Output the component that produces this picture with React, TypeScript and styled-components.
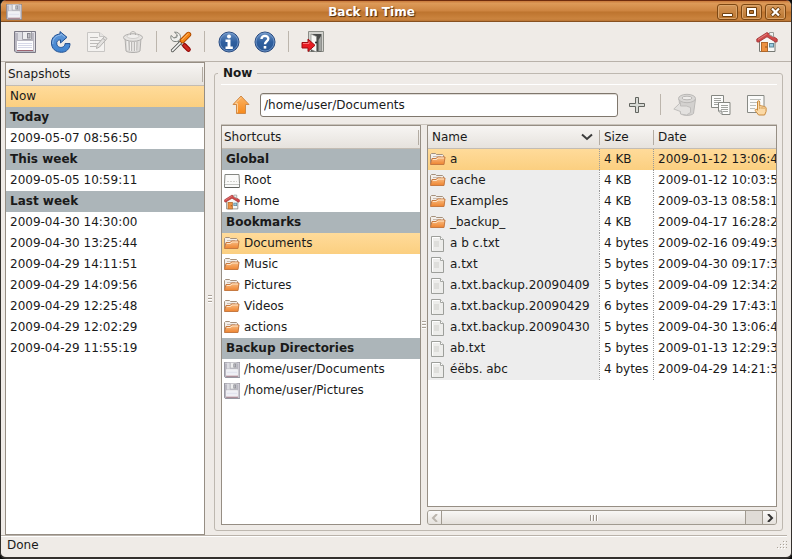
import React, { useState } from "react";
import styled, { createGlobalStyle } from "styled-components";

const GlobalStyle = createGlobalStyle`
  * { box-sizing: border-box; }
  html, body, #root { height: 100%; }
  body { margin: 0; background: #0b0b0b; }
  body, button, input, table { font-family: "DejaVu Sans", Verdana, sans-serif; font-size: 12px; color: #1a1a1a; }
  button { margin: 0; padding: 0; border: 0; background: none; }
`;

/* ---------- window frame ---------- */

const Window = styled.div`
  display: flex;
  flex-direction: column;
  height: 100%;
  border: 1px solid #33302d;
  border-top: 0;
  border-bottom-width: 2px;
  border-radius: 6px;
  background: #efebe7;
  overflow: hidden;
`;

const TitleBar = styled.header`
  display: flex;
  align-items: center;
  height: 22px;
  flex: none;
  padding: 1px 5px 0;
  border-top: 1px solid #6f2c0d;
  border-bottom: 1px solid #87501f;
  background: linear-gradient(#c97a3c, #dd9a58 12%, #cd8440 50%, #bd742e 55%, #cb843f 90%, #b87434);
`;

const Title = styled.h1`
  flex: 1;
  margin: 0;
  padding-left: 4px;
  text-align: center;
  font-size: 12px;
  line-height: 18px;
  color: #fff;
  text-shadow: 1px 1px 1px #4a2a0c;
`;

const WindowButtons = styled.div`
  display: flex;
  gap: 3px;
`;

const WindowButton = styled.button`
  display: flex;
  align-items: center;
  justify-content: center;
  width: 21px;
  height: 16px;
  border: 1px solid #7c4713;
  border-radius: 3px;
  background: linear-gradient(#d6985a, #b9742e);
  box-shadow: inset 0 0 0 1px #dba56c;
`;

const Toolbar = styled.div`
  display: flex;
  align-items: center;
  flex: none;
  height: 40px;
  padding: 0 6px;
  border-bottom: 1px solid #b9b2aa;
`;

const ToolButton = styled.button`
  display: flex;
  align-items: center;
  justify-content: center;
  flex: none;
  width: 36px;
  height: 36px;
  svg { display: block; }
  &:disabled { opacity: 0.5; filter: grayscale(1); }
`;

const ToolSeparator = styled.span`
  flex: none;
  width: 12px;
  height: 21px;
  background: linear-gradient(#bcb5ac, #bcb5ac) 5px 0 / 1px 100% no-repeat;
`;

const Spacer = styled.span`
  flex: 1;
`;

const Main = styled.main`
  display: flex;
  flex: 1;
  min-height: 0;
  padding: 0 8px 0 4px;
`;

const StatusBar = styled.footer`
  display: flex;
  align-items: center;
  justify-content: space-between;
  flex: none;
  height: 22px;
  margin-right: 4px;
  padding-left: 6px;
  padding-bottom: 3px;
  border-top: 1px solid #b9b2aa;
  box-shadow: inset 0 1px #fff;
`;

/* ---------- panes ---------- */

const Pane = styled.section`
  display: flex;
  flex-direction: column;
  flex: none;
  width: 200px;
  min-height: 0;
  border: 1px solid #968e84;
  background: #fff;
  overflow: hidden;
`;

const PaneHeader = styled.div`
  flex: none;
  height: 23px;
  padding: 0 2px;
  line-height: 23px;
  border-bottom: 1px solid #c3bcb3;
  background:
    linear-gradient(#b3aca3, #b3aca3) right 1px center / 1px 15px no-repeat,
    linear-gradient(#f7f5f3, #e6e2dd);
`;

const PlainList = styled.ul`
  margin: 0;
  padding: 0;
  list-style: none;
`;

const GroupRow = styled.li`
  height: 21px;
  padding-left: 4px;
  line-height: 21px;
  font-weight: bold;
  background: #acb5b9;
`;

const ItemButton = styled.button<{ $active: boolean; $indent: number }>`
  display: flex;
  align-items: center;
  gap: 4px;
  width: 100%;
  height: 21px;
  padding-left: ${(p) => p.$indent}px;
  line-height: 21px;
  white-space: nowrap;
  text-align: left;
  background: ${(p) => (p.$active ? "linear-gradient(#ffdb9a, #fbcf80)" : "none")};
  svg { flex: none; }
`;

const Splitter = styled.div<{ $width: number }>`
  display: flex;
  align-items: center;
  justify-content: center;
  flex: none;
  width: ${(p) => p.$width}px;
  &::after {
    content: "";
    width: 4px;
    height: 8px;
    background: repeating-linear-gradient(#aaa298 0 1px, #fff 1px 2px, transparent 2px 3px);
  }
`;

const Group = styled.fieldset`
  display: flex;
  flex-direction: column;
  flex: 1;
  min-width: 0;
  margin: 0 0 4px;
  padding: 0 5px 5px 6px;
  border: 1px solid #beb8b0;
  border-radius: 3px;
`;

const Legend = styled.legend`
  margin-left: -3px;
  padding: 0 5px;
  line-height: 22px;
  font-weight: bold;
`;

const PathBar = styled.div`
  display: flex;
  align-items: center;
  flex: none;
  height: 41px;
  padding: 0 2px;
  border-top: 1px solid #fff;
  border-bottom: 1px solid #c9c3bb;
`;

const PathInput = styled.input`
  flex: 1;
  min-width: 0;
  height: 24px;
  margin: 0 1px;
  padding: 0 3px;
  border: 1px solid #7f776d;
  border-radius: 3px;
  background: #fff;
  box-shadow: inset 0 1px #e0dcd7;
  outline: none;
`;

const Browser = styled.div`
  display: flex;
  flex: 1;
  min-height: 0;
`;

const FileArea = styled.div`
  display: flex;
  flex-direction: column;
  gap: 3px;
  flex: 1;
  min-width: 0;
`;

const FilePane = styled(Pane)`
  flex: 1;
  width: auto;
`;

const FileTable = styled.table`
  width: 100%;
  table-layout: fixed;
  border-collapse: separate;
  border-spacing: 0;
  th, td { padding: 0; overflow: hidden; white-space: nowrap; text-align: left; font-weight: normal; }
`;

const HeadCell = styled.th<{ $width?: number; $first?: boolean }>`
  width: ${(p) => (p.$width ? `${p.$width}px` : "auto")};
  height: 23px;
  border-bottom: 1px solid #c3bcb3;
  background:
    linear-gradient(#b3aca3, #b3aca3) ${(p) => (p.$first ? "-9px" : "0")} center / 1px 15px no-repeat,
    linear-gradient(#f7f5f3, #e6e2dd);
`;

const SortButton = styled.button<{ $pad?: number }>`
  display: flex;
  align-items: center;
  justify-content: space-between;
  width: 100%;
  padding: 0 6px 0 ${(p) => p.$pad ?? 5}px;
  line-height: 22px;
`;

const FileRow = styled.tr<{ $active: boolean }>`
  td {
    height: 21px;
    line-height: 21px;
    background-color: ${(p) => (p.$active ? "#fdd38a" : "#fff")};
    background-image: ${(p) => (p.$active ? "linear-gradient(#ffdb9a, #fbcf80)" : "none")};
  }
  td:first-child { background-color: ${(p) => (p.$active ? "#fdd38a" : "#ededed")}; }
  td + td { padding-left: 4px; border-left: 1px dotted #999; }
`;

const NameCell = styled.div`
  display: flex;
  align-items: center;
  gap: 4px;
  height: 21px;
  padding-left: 2px;
  svg { flex: none; }
`;

const ScrollBar = styled.div`
  display: flex;
  flex: none;
  height: 15px;
  border: 1px solid #a09a90;
  border-radius: 3px;
  background: #dfdbd6;
  overflow: hidden;
`;

const ScrollButton = styled.button<{ $side: "left" | "right" }>`
  display: flex;
  align-items: center;
  justify-content: center;
  width: 14px;
  flex: none;
  border-${(p) => (p.$side === "left" ? "right" : "left")}: 1px solid #a09a90;
  background: linear-gradient(#fbfaf9, #e5e1dc);
`;

const ScrollTrack = styled.div`
  display: flex;
  flex: 1;
`;

const ScrollThumb = styled.div`
  display: flex;
  align-items: center;
  justify-content: center;
  width: 95%;
  border-right: 1px solid #a09a90;
  background: linear-gradient(#f8f7f5, #e4e0db);
`;

/* ---------- icons ---------- */

const FloppyIcon = ({ size = 22 }: { size?: number }) => (
  <svg width={size} height={size} viewBox="0 0 22 22">
    <path d="M.5.5h21v21H2L.5 20z" fill="#b9b7c1" stroke="#7b7984" />
    <path d="M1.5 1.5h19v19" fill="none" stroke="#e2e1e7" />
    <path d="M4 1h14v8H4z" fill="#dcdce1" />
    <path d="M8.5 1v7.500h9V1" fill="#eeeeef" stroke="#a0a0a8" />
    <rect x="13.500" y="2.500" width="2.500" height="4.500" fill="#c4c4ca" stroke="#85858d" />
    <rect x="3" y="10" width="16" height="9" fill="#fdfdfe" />
    <path d="M4 12.500h14M4 14.500h14M4 16.500h14" stroke="#d6d8e8" />
    <path d="M3 19.500h16" stroke="#9d6471" strokeWidth="1" />
  </svg>
);

const RefreshIcon = () => (
  <svg width="22" height="22" viewBox="0 0 22 22">
    <defs>
      <linearGradient id="refreshBlue" x1="0" y1="0" x2="0" y2="1">
        <stop offset="0" stopColor="#5f97d8" />
        <stop offset="1" stopColor="#3f83d0" />
      </linearGradient>
    </defs>
    <path
      d="M10 3V.600L17 6.300 10.500 12V8.800C7.500 8.800 6.300 11 6.800 13.200c.700 3 4.200 4.200 6.700 2.400 1.200-.900 1.500-1.800 1.500-3h5c0 5-3.500 8.700-8.500 8.700C5.500 21.300 1.500 17.500 1.500 12S5 3.500 10 3z"
      fill="url(#refreshBlue)" stroke="#204f91" strokeLinejoin="round"
    />
    <path d="M2.800 13C2.500 8 5.500 4.500 11 4V2.800l4 3.400" fill="none" stroke="#9dc3ee" strokeWidth=".8" />
  </svg>
);

const EditIcon = () => (
  <svg width="22" height="22" viewBox="0 0 22 22">
    <path d="M1.500 1.500h12l5 4v15h-17z" fill="#fafafa" stroke="#a2a2a2" />
    <path d="M13.500 1.500v4h5" fill="#ddd" stroke="#a2a2a2" />
    <path d="M4 6.500h8M4 9.500h11M4 12.500h8M4 15.500h6" stroke="#8c8c8c" />
    <path d="M18.500 5.500l2.500 2-7.500 8.500-3 1.500.5-3.500z" fill="#d8d8d8" stroke="#777" />
    <path d="M17 7.500l2.500 2" stroke="#777" />
  </svg>
);

const TrashIcon = () => (
  <svg width="22" height="22" viewBox="0 0 22 22">
    <path d="M3 7l1 13c2 2 12 2 14 0l1-13z" fill="#cfcfcb" stroke="#73736f" />
    <path d="M7 10.500l.3 9M9.700 11v9M12.300 11v9M15 10.500l-.3 9" stroke="#777" />
    <path d="M5.500 10l.4 9M8.500 11v9M11 11v9M13.700 11v9" stroke="#f5f5f5" />
    <ellipse cx="11" cy="6.500" rx="9.500" ry="3.800" fill="#dededb" stroke="#73736f" />
    <ellipse cx="11" cy="5.300" rx="6" ry="2.200" fill="#f4f4f2" stroke="#999" strokeWidth=".7" />
    <path d="M8.500 4V2.500c0-2.500 5-2.500 5 0V4" fill="none" stroke="#73736f" />
  </svg>
);

const ToolsIcon = () => (
  <svg width="22" height="22" viewBox="0 0 22 22">
    <path d="M5.500 5.500l10 10" stroke="#6d706c" strokeWidth="4.200" />
    <path d="M5.500 5.500l10 10" stroke="#e4e4e1" strokeWidth="2.400" />
    <path d="M14.500 14.500l4 4" stroke="#8f0000" strokeWidth="4.600" strokeLinecap="round" />
    <path d="M14.500 14.500l4 4" stroke="#cc2a20" strokeWidth="2.800" strokeLinecap="round" />
    <path d="M4.500 1.200l2.800 2.600-.600 2.500-2.800.700L1 4.500c-.800 3 .800 6 4 6 3.500.500 6-2 5.500-5C10 2.500 7.500.800 4.500 1.200z" fill="#eeeeec" stroke="#7d807c" />
    <path d="M2.500 19.500L12 10" stroke="#555753" strokeWidth="3.200" strokeLinecap="round" />
    <path d="M2.500 19.500L12 10" stroke="#f6f6f5" strokeWidth="1.700" strokeLinecap="round" />
    <path d="M12.500 9.500L18.500 3.500" stroke="#b04c00" strokeWidth="5.400" strokeLinecap="round" />
    <path d="M12.500 9.500L18.500 3.500" stroke="#f58415" strokeWidth="3.700" strokeLinecap="round" />
    <path d="M12 8.700L18 2.700" stroke="#fdc276" strokeLinecap="round" />
  </svg>
);

const BadgeIcon = ({ glyph }: { glyph: "info" | "help" }) => (
  <svg width="22" height="22" viewBox="0 0 22 22">
    <defs>
      <linearGradient id={`badge-${glyph}`} x1="0" y1="0" x2="0" y2="1">
        <stop offset="0" stopColor="#6d93c4" />
        <stop offset=".5" stopColor="#2f5f9f" />
        <stop offset="1" stopColor="#2a5692" />
      </linearGradient>
    </defs>
    <circle cx="11" cy="11" r="10" fill={`url(#badge-${glyph})`} stroke="#2b4c80" />
    <circle cx="11" cy="11" r="9" fill="none" stroke="#7fa3d2" strokeWidth=".7" />
    {glyph === "info" ? (
      <g fill="#fff">
        <circle cx="11" cy="5.500" r="2" />
        <path d="M7.500 8.500h5v7h2.300V18H7.500v-2.500h2V11h-2z" />
      </g>
    ) : (
      <g>
        <path d="M7.500 8C7.500 3.800 14.500 4 14.300 7.800 14.200 10.300 11 10.200 11 13.300" fill="none" stroke="#fff" strokeWidth="2.400" />
        <rect x="9.700" y="15" width="2.600" height="2.600" fill="#fff" />
      </g>
    )}
  </svg>
);

const ExitIcon = () => (
  <svg width="24" height="22" viewBox="0 0 24 22">
    <path d="M7.500.500h15v20h-15z" fill="#d3d3cf" stroke="#8b8d87" />
    <path d="M10 3h10.500v17.500H10z" fill="#4a4c4b" />
    <path d="M10 3l5.500 2.500V21L10 18.500z" fill="#f7f7f5" stroke="#8b8d88" strokeWidth=".7" />
    <path d="M17.500 9l2.500-4v15h-2.500z" fill="#a3a5a2" />
    <circle cx="15" cy="11.500" r="1" fill="#222" />
    <path d="M1 11.500h6V8l7 6.300-7 6.200V17H1z" fill="#e81c23" stroke="#9d0d12" strokeLinejoin="round" />
    <path d="M2 12.500h6v-2" fill="none" stroke="#ff8a8a" strokeWidth=".8" />
  </svg>
);

const HomeIcon = ({ size = 22 }: { size?: number }) => (
  <svg width={size} height={size} viewBox="0 0 22 22">
    <path d="M3.500 9.500L11 4l8 5.500v11h-15.500z" fill="#f8f8f6" stroke="#777974" />
    <path d="M11 1.500L.800 8v2.600l1.400.600L11 5.800l8.800 5.400 1.400-.6V8z" fill="#cf4a4a" stroke="#9d2f2f" strokeWidth=".8" strokeLinejoin="round" />
    <path d="M2 8.500l9-5.700" stroke="#e88c8c" strokeWidth=".8" />
    <path d="M13.500 1.500h4v4.500l-4-2.300z" fill="#f1f1ef" stroke="#9a9c98" />
    <rect x="5.500" y="11.500" width="6" height="9" fill="#ed9140" stroke="#b0682b" />
    <circle cx="10" cy="16" r=".7" fill="#6d3b0c" />
    <rect x="13.500" y="12.500" width="4" height="3.500" fill="#9bcbe0" stroke="#5c8698" />
  </svg>
);

const UpIcon = () => (
  <svg width="18" height="20" viewBox="0 0 18 20">
    <defs>
      <linearGradient id="upOrange" x1="0" y1="0" x2="0" y2="1">
        <stop offset="0" stopColor="#fbb466" />
        <stop offset="1" stopColor="#f78a1c" />
      </linearGradient>
    </defs>
    <path d="M9 1l8 8.500h-3.500v9h-9v-9H1z" fill="url(#upOrange)" stroke="#d08a48" strokeLinejoin="round" />
    <path d="M9 2.500L3.200 8.500H5.500v9" fill="none" stroke="#fdcf98" />
  </svg>
);

const PlusIcon = () => (
  <svg width="16" height="16" viewBox="0 0 16 16">
    <path d="M6.500.500h3v6h6v3h-6v6h-3v-6h-6v-3h6z" fill="#d7d9d5" stroke="#62645f" />
  </svg>
);

const RestoreIcon = () => (
  <svg width="24" height="24" viewBox="0 0 24 24">
    <path d="M6 6l1.500 14.500c2 2.500 11 2.500 13 0L22.500 6z" fill="#b9b9b5" stroke="#858581" />
    <ellipse cx="14" cy="5.500" rx="8.500" ry="4.200" fill="#c4c4c0" stroke="#858581" />
    <ellipse cx="14" cy="5" rx="5" ry="1.800" fill="#efefec" stroke="#858581" />
    <path d="M.800 16l6.700-6.500V13h6l4 1.500v5l-4 2.500-6-1v-2.500z" fill="#d8d8d5" stroke="#91918d" strokeLinejoin="round" />
  </svg>
);

const CopyIcon = () => (
  <svg width="20" height="20" viewBox="0 0 20 20">
    <path d="M1 .500h11.500v12H.500V.500z" fill="#fcfcfb" stroke="#858782" />
    <path d="M3 3.500h7M3 5.500h7M3 7.500h5M3 9.500h4" stroke="#a0a29e" />
    <path d="M7.500 7.500h11.500v12h-8l-3.500-3.500z" fill="#fcfcfb" stroke="#858782" />
    <path d="M10 10.500h7M10 12.500h7M10 14.500h7M12 16.500h5" stroke="#a0a29e" />
    <path d="M7.500 16h3.500v3.500" fill="#ddd" stroke="#858782" />
  </svg>
);

const SelectIcon = () => (
  <svg width="20" height="22" viewBox="0 0 20 22">
    <path d="M.500 1.500h16.500v17H.500z" fill="#fbfbfa" stroke="#888a85" />
    <path d="M3 5.500h11M3 8.500h7M3 11.500h6M3 14.500h5" stroke="#bdbfbb" />
    <path
      d="M10.500 8c0-1.700 2.200-1.700 2.200 0v4c.8-.8 2-.6 2.200.300.800-.600 1.800-.300 2 .500 1-.400 2 .200 2.200 1.200v3.500l-1.500 3.500h-6L8.500 17c-1-1.500.500-2.500 1.500-1.300l.5.600z"
      fill="#fbd9a6" stroke="#c98a3c" strokeLinejoin="round"
    />
    <path d="M12.800 12.500v2.500M15 13v2M17 13.500v1.500" stroke="#c98a3c" strokeWidth=".8" />
  </svg>
);

const FolderIcon = () => (
  <svg width="16" height="16" viewBox="0 0 16 16">
    <defs>
      <linearGradient id="folderOrange" x1="0" y1="0" x2="0" y2="1">
        <stop offset="0" stopColor="#f9be85" />
        <stop offset="1" stopColor="#ee8430" />
      </linearGradient>
    </defs>
    <path d="M.500 11.500v-9l1-1h4l1 1h6l1 1v8z" fill="#f2eeea" stroke="#a4907c" />
    <path d="M3 4.500h8" stroke="#c9bcb0" />
    <path d="M.500 12.500l1.500-6h4l1.500-1.500h7.500l-1 7.500z" fill="url(#folderOrange)" stroke="#c67a42" strokeLinejoin="round" />
    <path d="M2.700 7.500h4l1.300-1.500h6" fill="none" stroke="#fde3c5" />
  </svg>
);

const FileIcon = () => (
  <svg width="16" height="16" viewBox="0 0 16 16">
    <path d="M1.500.500h9l3 3v12h-12z" fill="#ededeb" stroke="#9d9f9b" strokeLinejoin="round" />
    <path d="M2.500 14.500v-13h7" fill="none" stroke="#fff" />
    <path d="M10.500.500v3h3" fill="#fff" stroke="#a5a7a3" />
    <path d="M4 5h5v6H4z" fill="#dededb" />
  </svg>
);

const DriveIcon = () => (
  <svg width="16" height="16" viewBox="0 0 16 16">
    <path d="M1 1.500h14l.5 9v4H.500v-4z" fill="#fafaf9" stroke="#858782" strokeLinejoin="round" />
    <path d="M1 11.500h14" stroke="#c3c4c1" />
    <path d="M3 8.500h10" stroke="#d2d2ce" strokeDasharray="2 1" />
    <path d="M1 14.500h14" stroke="#5f615d" />
  </svg>
);

const Chevron = ({ d, color, w = 8, h = 8 }: { d: string; color: string; w?: number; h?: number }) => (
  <svg width={w} height={h} viewBox={`0 0 ${w} ${h}`}>
    <path d={d} fill="none" stroke={color} strokeWidth="2" />
  </svg>
);

const GripIcon = () => (
  <svg width="12" height="10" viewBox="0 0 12 10">
    <path d="M8 1.500h4M5 4.500h7M2 7.500h10" stroke="#aaa298" strokeDasharray="1 2" />
    <path d="M9 2.500h3M6 5.500h6M3 8.500h9" stroke="#fff" strokeDasharray="1 2" />
  </svg>
);

/* ---------- data ---------- */

type Entry = { label: string; group?: boolean; icon?: React.ReactNode };

const snapshots: Entry[] = [
  { label: "Now" },
  { label: "Today", group: true },
  { label: "2009-05-07 08:56:50" },
  { label: "This week", group: true },
  { label: "2009-05-05 10:59:11" },
  { label: "Last week", group: true },
  { label: "2009-04-30 14:30:00" },
  { label: "2009-04-30 13:25:44" },
  { label: "2009-04-29 14:11:51" },
  { label: "2009-04-29 14:09:56" },
  { label: "2009-04-29 12:25:48" },
  { label: "2009-04-29 12:02:29" },
  { label: "2009-04-29 11:55:19" },
];

const shortcuts: Entry[] = [
  { label: "Global", group: true },
  { label: "Root", icon: <DriveIcon /> },
  { label: "Home", icon: <HomeIcon size={16} /> },
  { label: "Bookmarks", group: true },
  { label: "Documents", icon: <FolderIcon /> },
  { label: "Music", icon: <FolderIcon /> },
  { label: "Pictures", icon: <FolderIcon /> },
  { label: "Videos", icon: <FolderIcon /> },
  { label: "actions", icon: <FolderIcon /> },
  { label: "Backup Directories", group: true },
  { label: "/home/user/Documents", icon: <FloppyIcon size={16} /> },
  { label: "/home/user/Pictures", icon: <FloppyIcon size={16} /> },
];

const files = [
  { name: "a", dir: true, size: "4 KB", date: "2009-01-12 13:06:42" },
  { name: "cache", dir: true, size: "4 KB", date: "2009-01-12 10:03:51" },
  { name: "Examples", dir: true, size: "4 KB", date: "2009-03-13 08:58:16" },
  { name: "_backup_", dir: true, size: "4 KB", date: "2009-04-17 16:28:20" },
  { name: "a b c.txt", size: "4 bytes", date: "2009-02-16 09:49:35" },
  { name: "a.txt", size: "5 bytes", date: "2009-04-30 09:17:31" },
  { name: "a.txt.backup.20090409", size: "5 bytes", date: "2009-04-09 12:34:22" },
  { name: "a.txt.backup.20090429", size: "6 bytes", date: "2009-04-29 17:43:14" },
  { name: "a.txt.backup.20090430", size: "5 bytes", date: "2009-04-30 13:06:43" },
  { name: "ab.txt", size: "5 bytes", date: "2009-01-13 12:29:33" },
  { name: "éëbs. abc", size: "4 bytes", date: "2009-04-29 14:21:30" },
];

const EntryList = ({ entries, initial, indent }: { entries: Entry[]; initial: string; indent: number }) => {
  const [selected, setSelected] = useState(initial);
  return (
    <PlainList>
      {entries.map((e) =>
        e.group ? (
          <GroupRow key={e.label}>{e.label}</GroupRow>
        ) : (
          <li key={e.label}>
            <ItemButton $active={selected === e.label} $indent={indent} onClick={() => setSelected(e.label)}>
              {e.icon}
              {e.label}
            </ItemButton>
          </li>
        )
      )}
    </PlainList>
  );
};

export default function App() {
  const [path, setPath] = useState("/home/user/Documents");
  const [file, setFile] = useState("a");

  return (
    <Window>
      <GlobalStyle />
      <TitleBar>
        <FloppyIcon size={16} />
        <Title>Back In Time</Title>
        <WindowButtons>
          <WindowButton aria-label="Minimize">
            <svg width="11" height="10" viewBox="0 0 11 10">
              <path d="M.500 6.500h10v3H.500z" fill="#fff" stroke="#70400f" />
            </svg>
          </WindowButton>
          <WindowButton aria-label="Maximize">
            <svg width="11" height="10" viewBox="0 0 11 10">
              <path d="M.500.500h10v9H.500z" fill="#fff" stroke="#70400f" />
              <path d="M3.500 3.500h4v3h-4z" fill="#b9742e" stroke="#70400f" />
            </svg>
          </WindowButton>
          <WindowButton aria-label="Close">
            <svg width="11" height="10" viewBox="0 0 11 10">
              <path d="M1.500 1l8 8M9.500 1l-8 8" stroke="#70400f" strokeWidth="4" />
              <path d="M2 1.500l7 7M9 1.500l-7 7" stroke="#fff" strokeWidth="2.200" />
            </svg>
          </WindowButton>
        </WindowButtons>
      </TitleBar>

      <Toolbar role="toolbar">
        <ToolButton aria-label="Take snapshot"><FloppyIcon /></ToolButton>
        <ToolButton aria-label="Refresh"><RefreshIcon /></ToolButton>
        <ToolButton aria-label="Snapshot name" disabled><EditIcon /></ToolButton>
        <ToolButton aria-label="Remove snapshot" disabled><TrashIcon /></ToolButton>
        <ToolSeparator />
        <ToolButton aria-label="Settings"><ToolsIcon /></ToolButton>
        <ToolSeparator />
        <ToolButton aria-label="About"><BadgeIcon glyph="info" /></ToolButton>
        <ToolButton aria-label="Help"><BadgeIcon glyph="help" /></ToolButton>
        <ToolSeparator />
        <ToolButton aria-label="Exit"><ExitIcon /></ToolButton>
        <Spacer />
        <ToolButton aria-label="Home"><HomeIcon /></ToolButton>
      </Toolbar>

      <Main>
        <Pane aria-label="Snapshots">
          <PaneHeader>Snapshots</PaneHeader>
          <EntryList entries={snapshots} initial="Now" indent={4} />
        </Pane>
        <Splitter $width={9} />
        <Group>
          <Legend>Now</Legend>
          <PathBar>
            <ToolButton aria-label="Up"><UpIcon /></ToolButton>
            <PathInput aria-label="Path" value={path} onChange={(e) => setPath(e.target.value)} />
            <ToolButton aria-label="Add bookmark"><PlusIcon /></ToolButton>
            <ToolSeparator />
            <ToolButton aria-label="Restore" disabled><RestoreIcon /></ToolButton>
            <ToolButton aria-label="Copy"><CopyIcon /></ToolButton>
            <ToolButton aria-label="Snapshots list"><SelectIcon /></ToolButton>
          </PathBar>
          <Browser>
            <Pane aria-label="Shortcuts">
              <PaneHeader>Shortcuts</PaneHeader>
              <EntryList entries={shortcuts} initial="Documents" indent={2} />
            </Pane>
            <Splitter $width={6} />
            <FileArea>
              <FilePane aria-label="Files">
                <FileTable>
                  <thead>
                    <tr>
                      <HeadCell $width={171} $first>
                        <SortButton $pad={4}>
                          Name
                          <Chevron d="M1 1.500l5 4.500 5-4.500" color="#3c3c3c" w={12} />
                        </SortButton>
                      </HeadCell>
                      <HeadCell $width={54}><SortButton>Size</SortButton></HeadCell>
                      <HeadCell><SortButton>Date</SortButton></HeadCell>
                    </tr>
                  </thead>
                  <tbody>
                    {files.map((f) => (
                      <FileRow key={f.name} $active={file === f.name} onClick={() => setFile(f.name)}>
                        <td>
                          <NameCell>
                            {f.dir ? <FolderIcon /> : <FileIcon />}
                            {f.name}
                          </NameCell>
                        </td>
                        <td>{f.size}</td>
                        <td>{f.date}</td>
                      </FileRow>
                    ))}
                  </tbody>
                </FileTable>
              </FilePane>
              <ScrollBar>
                <ScrollButton $side="left" aria-label="Scroll left" disabled>
                  <Chevron d="M6 0L2 4l4 4" color="#bbb5ad" />
                </ScrollButton>
                <ScrollTrack>
                  <ScrollThumb>
                    <svg width="8" height="6" viewBox="0 0 8 6">
                      <path d="M.500 0v6M3.500 0v6M6.500 0v6" stroke="#9a938a" />
                      <path d="M1.500 0v6M4.500 0v6M7.500 0v6" stroke="#fff" />
                    </svg>
                  </ScrollThumb>
                </ScrollTrack>
                <ScrollButton $side="right" aria-label="Scroll right">
                  <Chevron d="M2 0l4 4-4 4" color="#333" />
                </ScrollButton>
              </ScrollBar>
            </FileArea>
          </Browser>
        </Group>
      </Main>

      <StatusBar>
        Done
        <GripIcon />
      </StatusBar>
    </Window>
  );
}
